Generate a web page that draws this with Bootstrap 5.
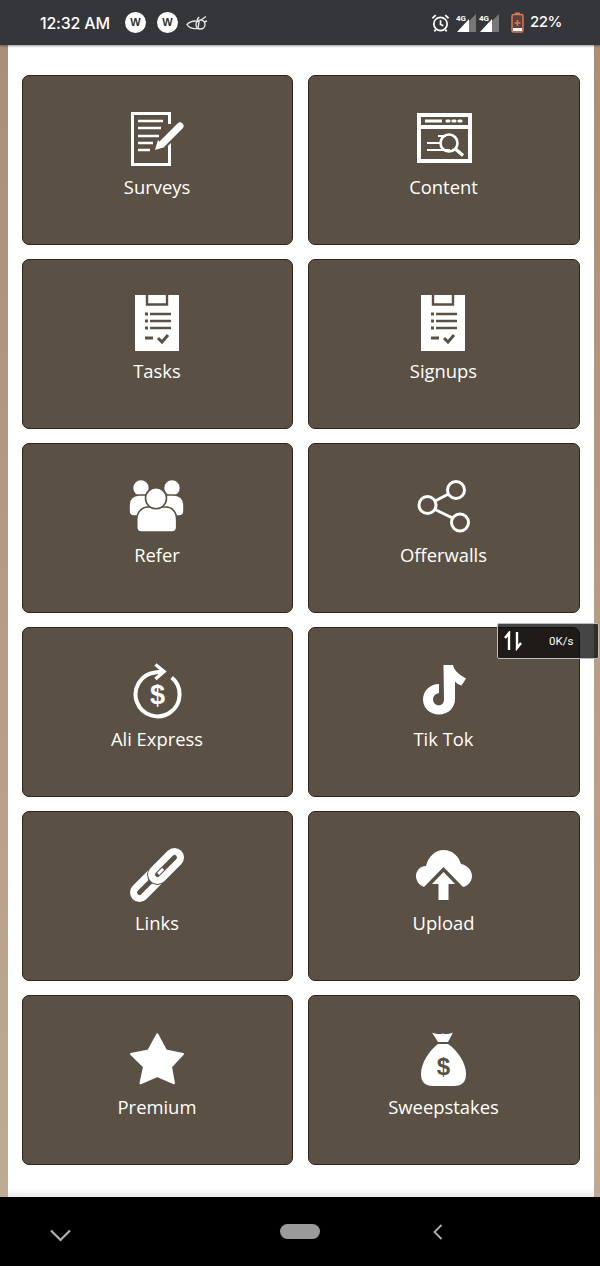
<!DOCTYPE html>
<html lang="en">
<head>
  <meta charset="UTF-8" />
  <meta name="viewport" content="width=device-width, initial-scale=1" />
  <title>Earn</title>
  <link href="https://cdn.jsdelivr.net/npm/bootstrap@5.3.0/dist/css/bootstrap.min.css" rel="stylesheet">
  <style>
    html, body { width: 600px; height: 1266px; overflow: hidden; }
    body { background: #b59d88; font-family: "Open Sans", sans-serif; }

    /* status bar */
    .barra-status { height: 45px; background: #343639; color: #fff; padding: 0 40px; box-shadow: 0 1px 2px rgba(0,0,0,.4); position: relative; z-index: 2; font-family: Inter, Roboto, sans-serif; font-weight: 500; font-size: 16px; }
    .bola-w { width: 21px; height: 21px; border-radius: 50%; background: #fff; color: #333; font: 700 11px/21px "Liberation Sans", sans-serif; text-align: center; }
    .hora { width: 71px; margin-right: 14px; letter-spacing: -.2px; white-space: nowrap; }
    .bola-w + .bola-w { margin-left: 11px; }
    .status-dir { gap: 3px; }
    .pct { margin-left: 3px; width: 30px; font-size: 15px; letter-spacing: -.5px; white-space: nowrap; }

    /* painel */
    .faixa { height: 1152px; padding: 0 6px 0 8px; background: linear-gradient(#a98f78, #c0a995); }
    .painel { height: 100%; background: linear-gradient(#fff 1143px, #ececec); padding: 30px 0 0 14px; }
    .grade { display: grid; grid-template-columns: 271px 272px; column-gap: 15px; row-gap: 14px; }
    .cartao { height: 170px; background: #5b5044; border: 1px solid #2b251c; border-radius: 7px; color: #fff; padding-top: 31px; text-align: center; }
    .cartao svg { display: block; margin: 0 auto; }
    .rotulo { margin-top: 8px; padding-right: 1px; font-size: 18.4px; line-height: 24px; white-space: nowrap; }

    /* navigation */
    .barra-nav { height: 69px; background: #000; position: relative; }
    .pilula { width: 40px; height: 15px; border-radius: 8px; background: #9a9a9a; }
    .nav-icone { position: absolute; }
    .nav-esq { left: 50px; top: 32px; }
    .nav-dir { left: 433px; top: 27px; }
    .pilula-pos { position: absolute; left: 280px; top: 27px; }

    /* overlay of net speed */
    .velocidade { position: absolute; left: 497px; top: 623px; width: 102px; height: 36px; background: rgba(10,10,10,.76); border: 1px solid #bdbdbd; border-radius: 2px; color: #fff; font: 11.5px/35px Roboto, sans-serif; z-index: 5; }
    .velocidade span { position: absolute; left: 51px; top: 0; }
    .velocidade svg { position: absolute; left: 5px; top: 7px; }
  </style>
</head>
<body>

  <!-- Barra de status -->
  <div class="barra-status d-flex align-items-center">
    <div class="hora">12:32 AM</div>
    <div class="bola-w">W</div>
    <div class="bola-w">W</div>
    <svg class="ms-2" width="22" height="16" viewBox="0 0 22 16" fill="none" stroke="#e8e8e8" stroke-width="1.4">
      <path d="M1 9.500C4 6.500 9 5.500 13 6.500L12 13.500C8 14 3 13 1 9.500Z"/>
      <circle cx="14.500" cy="9.500" r="4.500"/>
      <path d="M11 5L13 2M15 5L20 1.500M18 7L21 6"/>
    </svg>
    <div class="ms-auto d-flex align-items-center status-dir">
      <svg style="margin-right:3px" width="19" height="20" viewBox="0 0 20 20" fill="none" stroke="#fff" stroke-width="1.800">
        <circle cx="10" cy="11" r="7"/>
        <path d="M10 7v4.500l3 1.500M1.500 5L5 1.800M18.500 5L15 1.800M5 17l-1.500 1.800M15 17l1.500 1.800"/>
      </svg>
      <svg width="20" height="20" viewBox="0 0 20 20">
        <path d="M20 1V19H13V8Z" fill="#777"/><path d="M13 6V19H1Z" fill="#fff"/>
        <text x="0" y="7.500" font-family="Roboto, sans-serif" font-size="8" font-weight="700" fill="#fff">4G</text>
      </svg>
      <svg width="20" height="20" viewBox="0 0 20 20">
        <path d="M20 1V19H13V8Z" fill="#777"/><path d="M13 6V19H1Z" fill="#fff"/>
        <text x="0" y="7.500" font-family="Roboto, sans-serif" font-size="8" font-weight="700" fill="#fff">4G</text>
      </svg>
      <svg style="margin-left:9px" width="13" height="21" viewBox="0 0 13 21">
        <rect x="4" y=".5" width="5" height="3" fill="#d9785a"/>
        <rect x="1" y="2.500" width="11" height="17.500" rx="1.500" fill="#5b4138" stroke="#d9785a" stroke-width="1.500"/>
        <rect x="2" y="16" width="9" height="3" fill="#fff"/>
        <path d="M6.500 8v6M3.500 11h6" stroke="#d9785a" stroke-width="1.500"/>
      </svg>
      <div class="pct">22%</div>
    </div>
  </div>

  <!-- Grade de opções -->
  <div class="faixa">
    <div class="painel">
      <div class="grade">

        <div class="card cartao">
          <svg width="64" height="60" viewBox="0 0 64 60" fill="none" stroke="#fff">
            <path d="M43.500 30V57.500H6.500V6.500H43.500V17" stroke-width="3"/>
            <path d="M12 14H37M12 21H35M12 29H33M12 36H27M12 43H24" stroke-width="2.400"/>
            <path d="M54 19L37 36" stroke="#5b5044" stroke-width="11"/>
            <path d="M54 19L37 36" stroke-width="7" stroke-linecap="round"/>
            <path d="M29 43L32 33L39 40Z" fill="#fff" stroke="none"/>
          </svg>
          <div class="rotulo">Surveys</div>
        </div>

        <div class="card cartao">
          <svg width="64" height="60" viewBox="0 0 64 60" fill="none" stroke="#fff">
            <rect x="7" y="8" width="51" height="46" stroke-width="4"/>
            <path d="M7 20H58" stroke-width="4"/>
            <path d="M13 14H30" stroke-width="3"/>
            <path d="M35 14H37M41 14H43M47 14H49" stroke-width="3.200" stroke-linecap="round"/>
            <circle cx="37" cy="36" r="8.500" stroke-width="2.600"/>
            <path d="M43.500 42L51 48.500" stroke-width="3.400"/>
            <path d="M26 29H34M15 36H28M15 43H38" stroke-width="2.200"/>
          </svg>
          <div class="rotulo">Content</div>
        </div>

        <div class="card cartao">
          <svg width="64" height="60" viewBox="0 0 64 60" fill="none">
            <rect x="9" y="4" width="44" height="56" fill="#fff"/>
            <path d="M21 4V13.500H41V4" stroke="#5b5044" stroke-width="2.400"/>
            <path d="M19 23H22M19 30H22M19 37H22" stroke="#5b5044" stroke-width="3"/>
            <path d="M24 23H45M24 30H45M24 37H45" stroke="#5b5044" stroke-width="2.400"/>
            <path d="M19 47H27" stroke="#5b5044" stroke-width="3"/>
            <path d="M32 47L36 51L42 44" stroke="#5b5044" stroke-width="3"/>
          </svg>
          <div class="rotulo">Tasks</div>
        </div>

        <div class="card cartao">
          <svg width="64" height="60" viewBox="0 0 64 60" fill="none">
            <rect x="9" y="4" width="44" height="56" fill="#fff"/>
            <path d="M21 4V13.500H41V4" stroke="#5b5044" stroke-width="2.400"/>
            <path d="M19 23H22M19 30H22M19 37H22" stroke="#5b5044" stroke-width="3"/>
            <path d="M24 23H45M24 30H45M24 37H45" stroke="#5b5044" stroke-width="2.400"/>
            <path d="M19 47H27" stroke="#5b5044" stroke-width="3"/>
            <path d="M32 47L36 51L42 44" stroke="#5b5044" stroke-width="3"/>
          </svg>
          <div class="rotulo">Signups</div>
        </div>

        <div class="card cartao">
          <svg width="64" height="60" viewBox="0 0 64 60" fill="#fff" stroke="#5b5044" stroke-width="1.600">
            <circle cx="15" cy="13" r="8.500"/>
            <circle cx="46" cy="13" r="8.500"/>
            <path d="M3 36V30C3 24 7 20 13 20H48C54 20 58 24 58 30V36C58 39 56 41 53 41H8C5 41 3 39 3 36Z"/>
            <path d="M10.700 52V45C10.700 37 16 32 22 32H40C46 32 50.700 37 50.700 45V52C50.700 55 49 57 46 57H15C12.500 57 10.700 55 10.700 52Z"/>
            <circle cx="30" cy="23.300" r="10.500"/>
          </svg>
          <div class="rotulo">Refer</div>
        </div>

        <div class="card cartao">
          <svg width="64" height="60" viewBox="0 0 64 60" fill="none" stroke="#fff" stroke-width="3">
            <circle cx="44" cy="15" r="8.500"/>
            <circle cx="15.500" cy="30" r="8.500"/>
            <circle cx="48" cy="47.500" r="8.500"/>
            <path d="M23 26L36.500 19M23 34.500L40.500 43"/>
          </svg>
          <div class="rotulo">Offerwalls</div>
        </div>

        <div class="card cartao">
          <svg width="64" height="60" viewBox="0 0 64 60" fill="none" stroke="#fff" stroke-width="4">
            <path d="M45.700 18.500A22 22 0 1 1 29 13.500L37 12.500"/>
            <path d="M29.500 5.500L38 12.500L29.500 20" stroke-width="3.400"/>
            <text x="31.500" y="45" text-anchor="middle" font-family="Liberation Sans, sans-serif" font-weight="700" font-size="27" fill="#fff" stroke="none">$</text>
          </svg>
          <div class="rotulo">Ali Express</div>
        </div>

        <div class="card cartao">
          <svg width="64" height="60" viewBox="0 0 64 60" fill="#fff">
            <path fill-rule="evenodd" d="M31.500 6H41C42 11 46 15 54 19.500L49.500 26.500C47 26 45 24.500 43 22.500V40C43 49 36 55.500 27 55.500C18 55.500 11 49 11 40.500C11 32 18 25 27 25V34C24 34.500 21 36.800 21 40.300C21 43.600 23.500 46.300 26.500 46.300C30 46.300 32 44 32 40Z"/>
          </svg>
          <div class="rotulo">Tik Tok</div>
        </div>

        <div class="card cartao">
          <svg width="64" height="60" viewBox="0 0 64 60" fill="none">
            <rect x="-18" y="-6" width="36" height="12" rx="6" transform="translate(22 41) rotate(-45)" stroke="#fff" stroke-width="7"/>
            <rect x="-18" y="-6" width="36" height="12" rx="6" transform="translate(40 23) rotate(-45)" stroke="#5b5044" stroke-width="9"/>
            <rect x="-18" y="-6" width="36" height="12" rx="6" transform="translate(40 23) rotate(-45)" stroke="#fff" stroke-width="7"/>
          </svg>
          <div class="rotulo">Links</div>
        </div>

        <div class="card cartao">
          <svg width="64" height="60" viewBox="0 0 64 60">
            <path d="M14 44C8 44 4 38 4 33C4 27 9 23 14 23C16 14 23 7 31.500 7C41 7 47 14 49 21C55 22 60 27 60 33C60 39 55 44 50 44Z" fill="#fff"/>
            <path d="M31.500 24L12 44H24V60H39V44H51Z" fill="#5b5044"/>
            <path d="M31.500 29L20 41H26.500V57H36.500V41H43Z" fill="#fff"/>
          </svg>
          <div class="rotulo">Upload</div>
        </div>

        <div class="card cartao">
          <svg width="64" height="60" viewBox="0 0 64 60" fill="#fff">
            <path d="M31.300 7.300L40 23.500L57 27L45 39.700L48 56.300L31.300 49L14.500 56.300L18 39.700L5 27L22.500 23.500Z" stroke="#fff" stroke-width="2" stroke-linejoin="round"/>
          </svg>
          <div class="rotulo">Premium</div>
        </div>

        <div class="card cartao">
          <svg width="64" height="60" viewBox="0 0 64 60" fill="#fff">
            <path d="M20 5.500C23 7 27 7.500 31 6.500C34 7.500 38 7 41 5.500L36 15H26Z"/>
            <path d="M26 17H36C46 24 54 36 54 47C54 55 50 59 42 59H21C13 59 9 55 9 47C9 36 17 24 26 17Z"/>
            <text x="31.500" y="48" text-anchor="middle" font-family="Liberation Sans, sans-serif" font-weight="700" font-size="24" fill="#5b5044">$</text>
          </svg>
          <div class="rotulo">Sweepstakes</div>
        </div>

      </div>
    </div>
  </div>

  <!-- Barra de navegação -->
  <div class="barra-nav">
    <svg class="nav-icone nav-esq" width="21" height="13" viewBox="0 0 21 13" fill="none" stroke="#b0b0b0" stroke-width="2.200"><path d="M1 1.500L10.500 11L20 1.500"/></svg>
    <div class="pilula pilula-pos"></div>
    <svg class="nav-icone nav-dir" width="10" height="16" viewBox="0 0 10 16" fill="none" stroke="#b0b0b0" stroke-width="1.800"><path d="M8.500 1L1.500 8L8.500 15"/></svg>
  </div>

  <!-- Medidor de velocidade -->
  <div class="velocidade">
    <svg width="22" height="20" viewBox="0 0 22 20" fill="none" stroke="#fff" stroke-width="2.400">
      <path d="M6 19V3M2 7L6 2V7"/>
      <path d="M14 1V17M14 12V17L18 12"/>
    </svg>
    <span>0K/s</span>
  </div>

</body>
</html>
